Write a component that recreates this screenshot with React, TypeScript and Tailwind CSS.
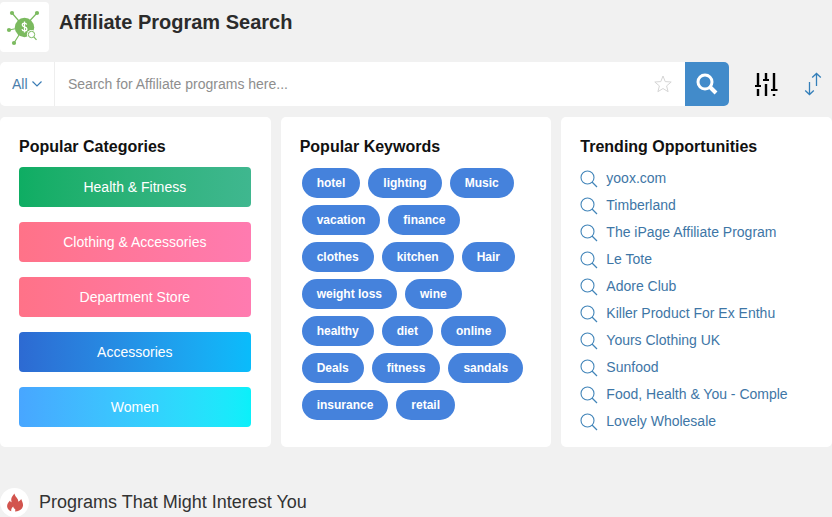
import React from 'react';

interface Category {
  name: string;
  gradient: string;
}

const categories: Category[] = [
  { name: 'Health & Fitness', gradient: 'from-[#0ead63] to-[#3fb78f]' },
  { name: 'Clothing & Accessories', gradient: 'from-[#ff7288] to-[#ff7bb0]' },
  { name: 'Department Store', gradient: 'from-[#ff7288] to-[#ff7bb0]' },
  { name: 'Accessories', gradient: 'from-[#2d6ad2] to-[#09bcfb]' },
  { name: 'Women', gradient: 'from-[#48a6ff] to-[#0af0fa]' },
];

const keywords = [
  'hotel', 'lighting', 'Music', 'vacation', 'finance', 'clothes', 'kitchen', 'Hair',
  'weight loss', 'wine', 'healthy', 'diet', 'online', 'Deals', 'fitness', 'sandals',
  'insurance', 'retail',
];

const trending = [
  'yoox.com',
  'Timberland',
  'The iPage Affiliate Program',
  'Le Tote',
  'Adore Club',
  'Killer Product For Ex Enthu',
  'Yours Clothing UK',
  'Sunfood',
  'Food, Health & You - Comple',
  'Lovely Wholesale',
];

const Logo = () => (
  <svg viewBox="0 2 49 50" className="size-full" fill="none" stroke="#7bba5f" aria-hidden="true">
    <path d="M24 27 12 13M24 27 37 13M24 27 9 30M24 27 14 43" strokeWidth="1.2" />
    <g fill="#7bba5f" stroke="none">
      <circle cx="12" cy="13" r="2.1" />
      <circle cx="37" cy="13" r="2.1" />
      <circle cx="9" cy="30" r="2.1" />
      <circle cx="14" cy="43" r="2.1" />
      <circle cx="24.5" cy="27.5" r="9.7" />
    </g>
    <path
      d="M26.700 24.600c-.3-1-1.100-1.500-2.200-1.500-1.300 0-2.200.7-2.200 1.800 0 2.500 4.600 1.300 4.600 4 0 1.300-1 2-2.400 2-1.300 0-2.300-.6-2.500-1.700M24.500 21.500v11"
      stroke="#fff"
      strokeWidth="1.3"
    />
    <circle cx="31.5" cy="34.5" r="4.600" fill="#fff" stroke="none" />
    <path d="m34 37 2 2" stroke="#fff" strokeWidth="3" />
    <circle cx="31.5" cy="34.5" r="3.200" strokeWidth="1" />
    <path d="m33.800 36.800 2.700 3" strokeWidth="1.200" />
  </svg>
);

const SlidersIcon = () => (
  <svg viewBox="0 0 24 24" className="size-6" fill="none" stroke="#000" strokeWidth="2.4" aria-hidden="true">
    <path d="M4 1v13M4 17v7M12 1v6M12 12v12M20 1v17M20 22v2" />
    <path d="M1 14h6M9 8h6M17 18h6.500" strokeWidth="2" />
  </svg>
);

const SortIcon = () => (
  <svg
    viewBox="0 0 18 24"
    className="h-6 w-[18px]"
    fill="none"
    stroke="#347fb9"
    strokeWidth="1.3"
    aria-hidden="true"
  >
    <path d="M5.500 10v12.500M1.200 18.500l4.300 4 4.300-4M12.500 14V1.500M8.200 5.500l4.300-4 4.300 4" />
  </svg>
);

const ThinSearchIcon = () => (
  <svg viewBox="0 0 18 18" className="size-[18px] shrink-0" fill="none" stroke="#4285b9" aria-hidden="true">
    <circle cx="7.500" cy="7.500" r="6.500" strokeWidth="1.100" />
    <path d="m12 12 5 5" strokeWidth="1.300" />
  </svg>
);

const FireIcon = () => (
  <svg viewBox="0 0 18 19" className="h-[19px] w-[18px]" fill="#d2544e" aria-hidden="true">
    <path d="M8.500.5C6.800 2.500 5.200 4.300 5.200 6.800c0 1 .3 1.600.4 2.400C4.700 9 4.300 8.500 4.100 7.500 2.500 9 1 11 1.100 13.300c.1 2.400 1.800 4.200 4.200 4.900-.4-2 .5-3.400 1.900-4.800.3 1.500 1 2 1.900 2.600.3.900.2 1.800-.1 2.500 4-.1 7.500-2.300 8-5.800.3-2.300-1-4.300-1.800-6.600-.7 1.200-1.500 1.900-2.800 2.600C12.300 5 9 4 8.500.5Z" />
  </svg>
);

const Card: React.FC<{ title: string; children: React.ReactNode }> = ({ title, children }) => (
  <section className="rounded-[5px] bg-white pt-[18px] pr-5 pb-[11px] pl-[19px]">
    <h2 className="mb-[7px] text-base leading-6 font-bold text-[#111]">{title}</h2>
    {children}
  </section>
);

const App: React.FC = () => {
  return (
    <div className="min-h-screen bg-[#f1f1f1] pt-0.5 font-['Liberation_Sans',Arial,sans-serif] text-sm text-[#333]">
      <header className="flex gap-2.5">
        <div className="h-[50px] w-[49px] rounded-[4px] bg-white">
          <Logo />
        </div>
        <h1 className="pt-1.5 text-xl leading-7 font-bold text-[#2b2b2b]">Affiliate Program Search</h1>
      </header>

      <div className="mt-2.5 flex items-center pr-2.5">
        <form className="flex h-11 flex-1 overflow-hidden rounded-[5px] bg-white">
          <div className="relative flex w-[55px] items-center border-r border-[#eee]">
            <select
              aria-label="Category"
              className="h-full w-full appearance-none bg-transparent pl-3 text-[#4a7eab] outline-none"
            >
              <option>All</option>
            </select>
            <svg
              viewBox="0 0 10 6"
              className="pointer-events-none absolute right-3 h-1.5 w-2.5"
              fill="none"
              stroke="#3a7cb5"
              strokeWidth="1.2"
              aria-hidden="true"
            >
              <path d="m.5 .5 4.500 4.500L9.500 .5" />
            </svg>
          </div>
          <input
            type="text"
            aria-label="Search"
            placeholder="Search for Affiliate programs here..."
            className="min-w-0 flex-1 px-[13px] text-sm outline-none placeholder:text-[#8e8e8e]"
          />
          <button type="button" aria-label="Favourite" className="px-[13px]">
            <svg viewBox="0 0 18 18" className="size-[18px]" fill="none" stroke="#d5d5d5" aria-hidden="true">
              <path d="m9 1 2.200 5.600 6 .4-4.600 3.900 1.500 5.800L9 13.500l-5.100 3.200 1.500-5.800L.8 7l6-.4Z" />
            </svg>
          </button>
          <button type="submit" aria-label="Search" className="flex w-11 items-center justify-center bg-[#428bca]">
            <svg viewBox="0 0 22 22" className="size-[22px]" fill="none" stroke="#fff" aria-hidden="true">
              <circle cx="9" cy="9" r="7" strokeWidth="3" />
              <path d="m14 14 6 6" strokeWidth="4" />
            </svg>
          </button>
        </form>
        <button type="button" aria-label="Filters" className="ml-[25px]">
          <SlidersIcon />
        </button>
        <button type="button" aria-label="Sort" className="ml-[26px]">
          <SortIcon />
        </button>
      </div>

      <main className="mt-[11px] grid grid-cols-3 gap-2.5">
        <Card title="Popular Categories">
          <div className="flex flex-col gap-[15px] pt-px">
            {categories.map((category) => (
              <button
                key={category.name}
                type="button"
                className={`h-10 rounded-[4px] bg-linear-to-r text-white ${category.gradient}`}
              >
                {category.name}
              </button>
            ))}
          </div>
        </Card>

        <Card title="Popular Keywords">
          <ul className="flex flex-wrap gap-x-2 gap-y-[7px] pt-0.5 pl-0.5">
            {keywords.map((keyword) => (
              <li key={keyword}>
                <button
                  type="button"
                  className="block h-[30px] rounded-full bg-[#4582dc] px-[15px] text-xs font-bold text-white"
                >
                  {keyword}
                </button>
              </li>
            ))}
          </ul>
        </Card>

        <Card title="Trending Opportunities">
          <ul>
            {trending.map((name) => (
              <li key={name}>
                <a href="#" className="flex h-[27px] items-start gap-2 text-[#3e76a6]">
                  <span className="pt-1">
                    <ThinSearchIcon />
                  </span>
                  <span className="leading-6">{name}</span>
                </a>
              </li>
            ))}
          </ul>
        </Card>
      </main>

      <div className="mt-10 flex items-center gap-2.5">
        <span className="flex size-[29px] items-center justify-center rounded-full bg-white">
          <FireIcon />
        </span>
        <h2 className="text-lg leading-[30px]">Programs That Might Interest You</h2>
      </div>
    </div>
  );
};

export default App;
